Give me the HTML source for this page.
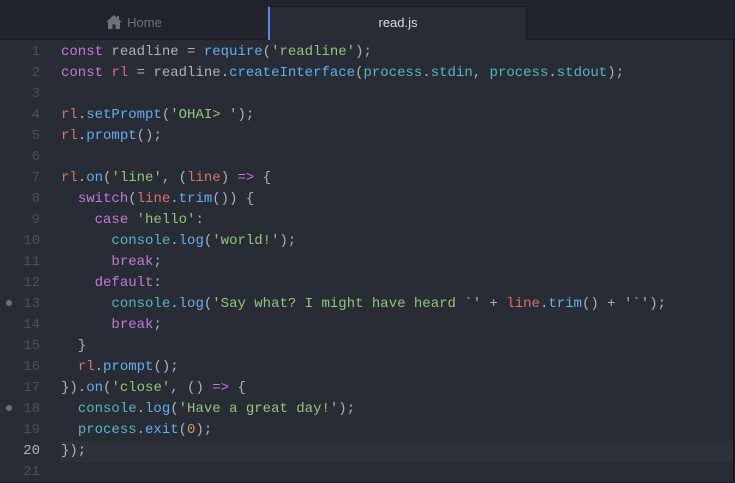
<!DOCTYPE html>
<html><head><meta charset="utf-8"><style>
html,body{margin:0;padding:0;width:735px;height:481px;overflow:hidden;background:#21252b;}
.tabs{position:absolute;left:0;top:0;width:735px;height:40px;background:#21252b;border-bottom:1px solid #181a1f;box-sizing:border-box;}
.tab{position:absolute;top:0;height:40px;font:13px "Liberation Sans",sans-serif;color:#9da5b4;text-align:center;line-height:45px;}
.home{left:0;width:268px;color:#6b717d;}
.active{left:268px;width:259px;top:6px;height:35px;line-height:32px;background:#282c34;border-left:2px solid #568af2;border-right:1px solid #181a1f;border-top:1px solid #181a1f;border-radius:2px 2px 0 0;color:#d7dae0;box-sizing:border-box;}
.ed{position:absolute;left:0;top:40px;width:733px;height:441px;background:#282c34;border-right:2px solid #181a1f;}
.ln{position:absolute;left:0;width:40px;text-align:right;color:#495162;font:14px "Liberation Mono",monospace;line-height:21px;}
.code{position:absolute;left:61px;top:2px;font:14px "Liberation Mono",monospace;line-height:21px;color:#abb2bf;white-space:pre;}
.cur{position:absolute;left:60px;top:401px;width:673px;height:21px;background:#2c313a;}
.k{color:#c678dd}.v{color:#e06c75}.f{color:#61afef}.s{color:#98c379}.c{color:#56b6c2}.n{color:#d19a66}
.dot{position:absolute;left:6px;width:6px;height:6px;border-radius:3px;background:#6b717d;}
</style></head><body>
<div class="tabs">
<div class="tab home"><svg width="16" height="14" viewBox="0 0 16 14" style="vertical-align:-2px;margin-right:5px"><path d="M8 0L0 7h2v7h4.5V9.5h3V14H14V7h2L13 4.4V1h-2v1.7z" fill="#6b717d"/></svg>Home</div>
<div class="tab active">read.js</div>
</div>
<div class="ed">
<div class="cur"></div>
<div class="dot" style="top:260px"></div>
<div class="dot" style="top:365px"></div>
<div class="ln" style="top:2px">1<br>2<br>3<br>4<br>5<br>6<br>7<br>8<br>9<br>10<br>11<br>12<br>13<br>14<br>15<br>16<br>17<br>18<br>19<br><span style="color:#abb2bf">20</span><br>21</div>
<div class="code"><span class="k">const</span> readline = <span class="f">require</span>(<span class="s">'readline'</span>);
<span class="k">const</span> <span class="v">rl</span> = readline.<span class="f">createInterface</span>(<span class="c">process</span>.<span class="c">stdin</span>, <span class="c">process</span>.<span class="c">stdout</span>);

<span class="v">rl</span>.<span class="f">setPrompt</span>(<span class="s">'OHAI&gt; '</span>);
<span class="v">rl</span>.<span class="f">prompt</span>();

<span class="v">rl</span>.<span class="f">on</span>(<span class="s">'line'</span>, (<span class="v">line</span>) <span class="k">=&gt;</span> {
  <span class="k">switch</span>(<span class="v">line</span>.<span class="f">trim</span>()) {
    <span class="k">case</span> <span class="s">'hello'</span>:
      <span class="c">console</span>.<span class="f">log</span>(<span class="s">'world!'</span>);
      <span class="k">break</span>;
    <span class="k">default</span>:
      <span class="c">console</span>.<span class="f">log</span>(<span class="s">'Say what? I might have heard `'</span> + <span class="v">line</span>.<span class="f">trim</span>() + <span class="s">'`'</span>);
      <span class="k">break</span>;
  }
  <span class="v">rl</span>.<span class="f">prompt</span>();
}).<span class="f">on</span>(<span class="s">'close'</span>, () <span class="k">=&gt;</span> {
  <span class="c">console</span>.<span class="f">log</span>(<span class="s">'Have a great day!'</span>);
  <span class="c">process</span>.<span class="f">exit</span>(<span class="n">0</span>);
});
</div>
</div>
</body></html>
